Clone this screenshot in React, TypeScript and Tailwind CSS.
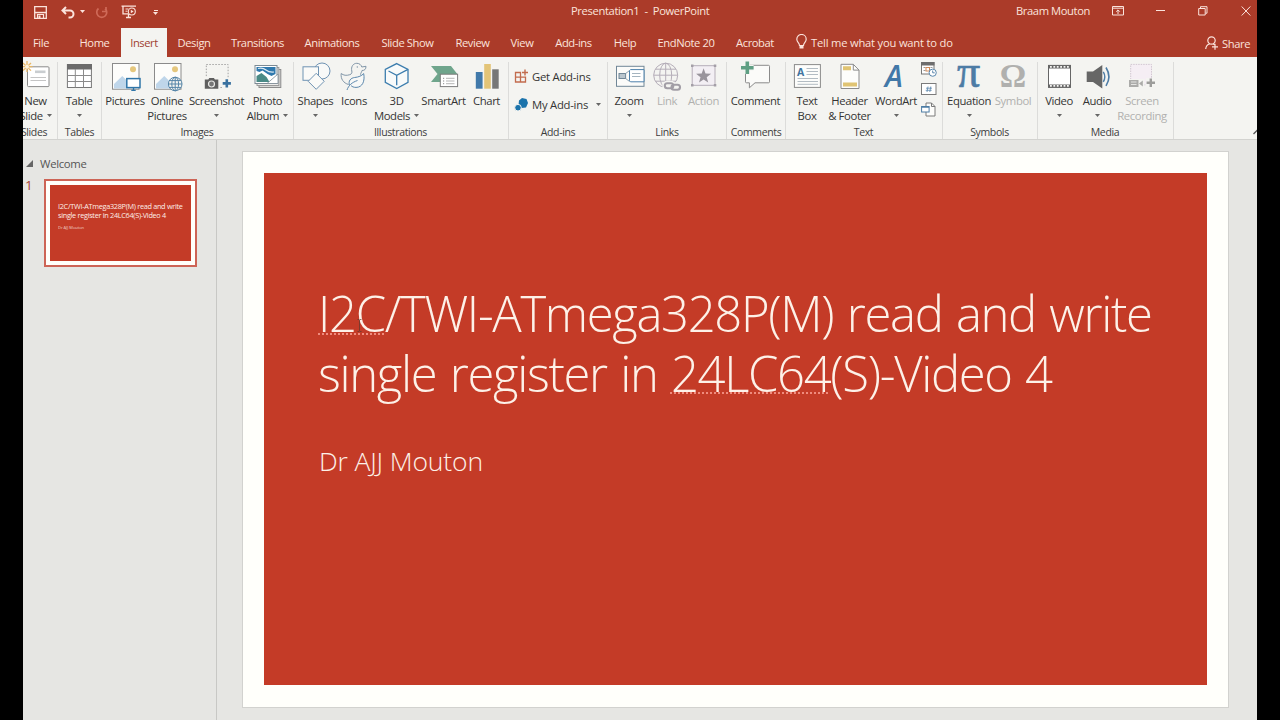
import type { ReactNode } from "react";
import clsx from "clsx";

const Icon = ({ children, className }: { children: ReactNode; className?: string }) => (
  <svg
    viewBox="0 0 30 30"
    fill="none"
    className={clsx("size-[30px] shrink-0 overflow-visible", className)}
  >
    {children}
  </svg>
);

const Caret = ({ className }: { className?: string }) => (
  <svg viewBox="0 0 5 3" className={clsx("h-[3px] w-[5px] shrink-0", className)}>
    <path d="M0 0h5L2.5 3z" fill="currentColor" />
  </svg>
);

const Globe = ({ cx, cy, r, stroke }: { cx: number; cy: number; r: number; stroke: string }) => (
  <g stroke={stroke} strokeWidth="1">
    <circle cx={cx} cy={cy} r={r} fill="#f4f4f1" />
    <ellipse cx={cx} cy={cy} rx={r * 0.5} ry={r} />
    <path
      d={`M${cx - r} ${cy}h${2 * r}M${cx} ${cy - r}v${2 * r}M${cx - r * 0.85} ${cy - r * 0.5}h${1.7 * r}M${cx - r * 0.85} ${cy + r * 0.5}h${1.7 * r}`}
    />
  </g>
);

const NewSlideIcon = () => (
  <Icon>
    <rect x="6.5" y="4.8" width="21.5" height="19.8" rx="1" fill="#fff" stroke="#8a8a8a" />
    <rect x="14" y="8.5" width="10.5" height="2.6" fill="#c9cdd0" />
    <path d="M9.5 15.5h15.5M9.5 18.5h15.5" stroke="#c5c5c5" />
    <path
      d="M6 -1v11M.5 4.7h11M2 1l8 7.6M10 1L2 8.6"
      stroke="#e9b765"
      strokeWidth="1.3"
    />
    <circle cx="6" cy="4.7" r="2" fill="#fbf3e0" />
  </Icon>
);

const TableIcon = () => (
  <Icon>
    <rect x="3.4" y="2.5" width="24" height="23" fill="#fff" stroke="#777" />
    <path d="M3 2h25v5.5H3z" fill="#6b6b6b" />
    <path d="M11.3 7v18.5M19.5 7v18.5M3.5 13.5h24M3.5 19.5h24" stroke="#8b8b8b" />
  </Icon>
);

const PictureBase = () => (
  <>
    <rect x="2.5" y="1.5" width="26.5" height="25.7" fill="#fdfdfb" stroke="#8b8b8b" />
    <circle cx="23" cy="7.3" r="3" fill="#e5c77d" />
    <path d="M4 26.5V22l8.3-8 5 5 3 3.5v4z" fill="#bfd6ea" />
  </>
);

const PicturesIcon = () => (
  <Icon>
    <PictureBase />
    <rect x="16.8" y="16.6" width="13.2" height="9" fill="#fff" stroke="#2f75a8" strokeWidth="1.5" />
    <path d="M21.3 28.3h4.4M23.5 26v2" stroke="#2f75a8" strokeWidth="1.3" />
  </Icon>
);

const OnlinePicturesIcon = () => (
  <Icon>
    <PictureBase />
    <Globe cx={23.2} cy={22} r={6.8} stroke="#5585a8" />
  </Icon>
);

const ScreenshotIcon = () => (
  <Icon>
    <rect x="4.3" y="2.5" width="21.8" height="23" stroke="#a3a3a3" strokeDasharray="1.5 1.5" />
    <path d="M2 15h15.5v12.5H2z" fill="#f4f4f1" />
    <path d="M20 16h8v10h-8z" fill="#f4f4f1" />
    <path d="M2.8 17.5h3.5l1-1.6h4.6l1 1.6h3.4v9.3H2.8z" fill="#5f5f5f" />
    <circle cx="9.5" cy="22" r="3" stroke="#e8e8e6" fill="#777" strokeWidth="1.2" />
    <path d="M24.8 17.3v8.2M20.7 21.4h8.2" stroke="#39719f" strokeWidth="2.6" />
  </Icon>
);

const PhotoAlbumIcon = () => (
  <Icon>
    <rect x="6" y="7.5" width="21.8" height="18" fill="#d8d8d6" stroke="#8b8b8b" />
    <rect x="4" y="5.5" width="21.8" height="18" fill="#ececea" stroke="#9b9b9b" />
    <rect x="2" y="3.5" width="22" height="18" fill="#fff" stroke="#7c8a94" />
    <path d="M3.5 5h19v7l-4 2-4-2-5-3.5-3 1.5-3-1z" fill="#2f78ad" />
    <path d="M5 6.5q5-1 8 1.5t8 2" stroke="#dbe9f2" strokeWidth="1.2" />
    <path d="M3.5 14l5-3 5 4 3 5h-13z" fill="#4a8a86" />
    <path d="M14 21.5l11-9.5v9.5z" fill="#fff" stroke="#7c8a94" strokeWidth=".8" />
  </Icon>
);

const ShapesIcon = () => (
  <Icon>
    <circle cx="21" cy="9" r="8" fill="#f8f9f8" stroke="#6f93b3" />
    <rect x="2" y="4.8" width="15.5" height="13.5" fill="#fafaf8" stroke="#6f93b3" />
    <path d="M15.2 11.3l8 8-8 8-8-8z" fill="#fafaf8" stroke="#6f93b3" />
  </Icon>
);

const IconsIcon = () => (
  <Icon>
    <path
      d="M9.5 22.5C4.5 21 1.5 17 2.2 11.5c2.5 2 5 2.3 8.6 1.2 2-.7 2.4-2 2-3.7-1-4 1.2-7.7 5-7.7 2.6 0 4.4 1.6 5 3.7l4.2-.7c0 3-1.4 4.2-4 4.2-.4 2-1.5 2.8-1.5 4.2"
      stroke="#8196a8"
    />
    <circle cx="18.3" cy="5" r=".7" fill="#8196a8" />
    <path
      d="M10.5 23.5c-1.4-4.5 1-7.5 5.2-8 4-.4 6.8-1.6 9-3.9 1.4 7.5-1.2 13.8-7.7 13.8-2.5 0-4-.8-5-1.9"
      fill="#f7f8f7"
      stroke="#5c88ad"
    />
    <path d="M8 28c1.5-4.5 5-7.7 10.5-9.5" stroke="#5c88ad" />
  </Icon>
);

const CubeIcon = () => (
  <Icon>
    <path
      d="M14.7 1.6l11.3 5.8v13L14.7 26.6 3.3 20.4v-13z"
      fill="#f8fafa"
      stroke="#3c7dae"
      strokeWidth="1.3"
    />
    <path d="M6.5 9l8.2 4.3L26 7.4M14.7 13.3v10" stroke="#3c7dae" strokeWidth="1.3" />
  </Icon>
);

const SmartArtIcon = () => (
  <Icon>
    <path d="M2 4h20l6.3 8-6.3 8H2l6.5-8z" fill="#6fa58c" />
    <rect x="11.3" y="12.2" width="17.3" height="12.4" fill="#fff" stroke="#7d7d7d" />
    <path d="M17 16.3h8.5M17 19h8.5M17 21.7h8.5" stroke="#b5b5b5" />
    <path d="M14 16.3h1.2M14 19h1.2M14 21.7h1.2" stroke="#8b8b8b" />
  </Icon>
);

const ChartIcon = () => (
  <Icon>
    <path d="M3.8 10h6.8v16.7H3.8z" fill="#4179aa" />
    <path d="M12.2 2h6.6v24.7h-6.6z" fill="#e3c477" />
    <path d="M20.2 7.3h6.5v19.4h-6.5z" fill="#777" />
  </Icon>
);

const ZoomIcon = () => (
  <Icon>
    <rect x="2.5" y="4.3" width="27.5" height="20" fill="#fbfbf9" stroke="#718797" />
    <rect x="5" y="11.5" width="6.6" height="5" fill="#b9c5cd" stroke="#718797" />
    <path d="M11.6 11.5l4-3M11.6 16.5l4 3" stroke="#8fa3b1" />
    <path d="M30 7.6H16.5l-1 1v10.2l1 1H30z" fill="#fff" stroke="#4d81ab" />
    <path d="M18 11.5h8.5M18 14.5h8.5" stroke="#a4b4bf" />
  </Icon>
);

const LinkIcon = () => (
  <Icon>
    <Globe cx={13.7} cy={13.2} r={12} stroke="#b4adb8" />
    <g stroke="#f4f4f1" strokeWidth="5">
      <rect x="12.8" y="21.3" width="8.5" height="5" rx="2.5" />
      <rect x="19.5" y="22.8" width="8.5" height="5" rx="2.5" />
    </g>
    <g stroke="#a29ea6" strokeWidth="2.1">
      <rect x="12.8" y="21.3" width="8.5" height="5" rx="2.5" />
      <rect x="19.5" y="22.8" width="8.5" height="5" rx="2.5" />
    </g>
  </Icon>
);

const ActionIcon = () => (
  <Icon>
    <rect x="3.2" y="3.7" width="22.8" height="19.6" fill="#f3eff4" stroke="#b5adb8" />
    <path
      d="M2 2.5h2.5V5H2zM24.8 2.5h2.5V5h-2.5zM2 22h2.5v2.5H2zM24.8 22h2.5v2.5h-2.5z"
      fill="#a49fa7"
    />
    <path
      d="M14.6 6.3l1.9 5.2 5.6.2-4.4 3.5 1.5 5.4-4.6-3.1-4.6 3.1 1.5-5.4-4.4-3.5 5.6-.2z"
      fill="#99949c"
    />
  </Icon>
);

const CommentIcon = () => (
  <Icon>
    <path
      d="M5.5 3.3h22q1 0 1 1v15.5q0 1-1 1H14l-5.6 5V20.8H5.5q-1 0-1-1V4.3q0-1 1-1z"
      fill="#fbfbf9"
      stroke="#8b8b8b"
    />
    <path d="M6.3-.5v12.6M0 5.8h12.6" stroke="#f4f4f1" strokeWidth="5.5" />
    <path d="M6.3-.5v12.6M0 5.8h12.6" stroke="#5f9f83" strokeWidth="3.6" />
  </Icon>
);

const TextBoxIcon = () => (
  <Icon>
    <rect x="2.4" y="2.6" width="26" height="22.8" fill="#fdfdfb" stroke="#8b8b8b" />
    <text x="5" y="14" fontSize="10.5" fontWeight="700" fill="#41749f" className="font-['Open_Sans']">
      A
    </text>
    <path d="M14.5 6.5H26M14.5 9.5H26M14.5 12.5H26M5.5 16.5H26M5.5 19.5H26M5.5 22.3H26" stroke="#b3bcc3" />
  </Icon>
);

const HeaderIcon = () => (
  <Icon>
    <path d="M6 2.3h12.3l5.7 5.8v18.4H6z" fill="#fdfdfb" stroke="#8b8b8b" />
    <path d="M18.3 2.3v5.8H24" stroke="#8b8b8b" />
    <path d="M8 4.3h8v4H8zM8 20.5h14v4H8z" fill="#e0c473" />
  </Icon>
);

const WordArtIcon = () => (
  <Icon>
    <text
      x="4"
      y="25.3"
      fontSize="30"
      fontWeight="600"
      fontStyle="italic"
      fill="#4278a8"
      className="font-['Open_Sans'] tracking-normal"
    >
      A
    </text>
  </Icon>
);

const EquationIcon = () => (
  <Icon>
    <text
      x="3"
      y="25.4"
      fontSize="46"
      fill="#4d7ca5"
      stroke="#4d7ca5"
      strokeWidth=".6"
      className="font-['Liberation_Serif'] tracking-normal"
    >
      π
    </text>
  </Icon>
);

const OmegaIcon = () => (
  <Icon>
    <text
      x="1.8"
      y="24.8"
      fontSize="33"
      fontWeight="700"
      fill="#b0b0ae"
      className="font-['Liberation_Serif'] tracking-normal"
    >
      Ω
    </text>
  </Icon>
);

const VideoIcon = () => (
  <Icon>
    <rect x="4.5" y="3.4" width="22" height="22" fill="#fff" stroke="#666" />
    <path d="M4.5 4.8h22M4.5 24h22" stroke="#666" strokeWidth="3.2" />
    <path d="M6 4.9h20M6 23.9h20" stroke="#f5f5f3" strokeWidth="1.8" strokeDasharray="1.8 1.6" />
  </Icon>
);

const AudioIcon = () => (
  <Icon>
    <path d="M4.7 9.5H11L20.3 3v23.5L11 20H4.7z" fill="#666" />
    <path d="M21.3 9.8q3 5 0 10" stroke="#4d7ca5" strokeWidth="1.4" />
    <path d="M24 5.5q5.8 9.2 0 18.4" stroke="#4d7ca5" strokeWidth="1.6" />
  </Icon>
);

const ScreenRecordingIcon = () => (
  <Icon>
    <rect x="3.7" y="2.4" width="20.8" height="20.5" fill="#f5eef4" stroke="#d2c6d2" strokeDasharray="1.5 1" />
    <path d="M1.5 17h16v9h-16zM19 16h6.500v10H19z" fill="#f4f4f1" />
    <path d="M2 18h9.5v7H2zM12 21.5l3.8-3v6z" fill="#ababa9" />
    <path d="M4 20h5.5M4 22.5h5.5" stroke="#e4e4e2" />
    <path d="M23.8 16.6v8.4M19.6 20.8H28" stroke="#9d9d9b" strokeWidth="2.4" />
  </Icon>
);

type RibbonButtonProps = {
  icon: ReactNode;
  lines: string[];
  width: string;
  caret?: "below" | "inline";
  disabled?: boolean;
};

const RibbonButton = ({ icon, lines, width, caret, disabled }: RibbonButtonProps) => (
  <button
    className={clsx(
      "flex shrink-0 flex-col items-center leading-[15px] whitespace-nowrap",
      width,
      disabled ? "text-[#b1b1af]" : "text-[#343434]",
    )}
  >
    <span className="mb-px">{icon}</span>
    {lines.map((line, i) => (
      <span key={line} className="flex items-center">
        {line}
        {caret === "inline" && i === lines.length - 1 && (
          <Caret className="ml-1 text-[#666]" />
        )}
      </span>
    ))}
    {caret === "below" && <Caret className="mt-[6px] text-[#666]" />}
  </button>
);

const RibbonGroup = ({
  label,
  className,
  labelClassName,
  children,
}: {
  label: string;
  className: string;
  labelClassName?: string;
  children: ReactNode;
}) => (
  <div
    className={clsx(
      "flex h-[77px] shrink-0 flex-col border-r border-[#dcdcda] text-[11.3px] tracking-[-0.38px]",
      className,
    )}
  >
    <div className="flex h-[64px]">{children}</div>
    <div
      className={clsx(
        "text-center text-[10.5px] leading-[13px] tracking-[-0.36px] whitespace-nowrap text-[#3d3d3d]",
        labelClassName,
      )}
    >
      {label}
    </div>
  </div>
);

const SmallTextIcons = () => (
  <div className="flex flex-col gap-[6px] pl-px">
    <svg viewBox="0 0 16 15" fill="none" className="h-[15px] w-4">
      <rect x=".5" y=".5" width="12.5" height="11.5" fill="#fff" stroke="#777" />
      <path d="M0 0h13.5v3.5H0z" fill="#6d6d6d" />
      <path d="M2.5 5.5h2M2.5 8.5h2M9.5 5.5h2" stroke="#9a9a9a" />
      <rect x="5" y="5.5" width="3.5" height="3.5" stroke="#d08a5a" />
      <circle cx="11.7" cy="10.7" r="3.6" fill="#fff" stroke="#5c88ad" />
      <path d="M11.7 8.5v2.3h2" stroke="#5c88ad" />
    </svg>
    <svg viewBox="0 0 16 13" fill="none" className="h-[13px] w-4">
      <rect x=".5" y=".5" width="14.5" height="11" fill="#fff" stroke="#7b7b7b" />
      <path d="M7 3.5l-1 5.5M9.8 3.5l-1 5.5M5 5.2h6M4.7 7.3h6" stroke="#5c88ad" strokeWidth=".8" />
    </svg>
    <svg viewBox="0 0 16 15" fill="none" className="h-[15px] w-4">
      <path d="M5 1h5.5l3.5 3.5V14H5z" fill="#fdfdfb" stroke="#7b7b7b" />
      <path d="M10.5 1v3.5H14" stroke="#7b7b7b" />
      <rect x=".6" y="4.5" width="7.5" height="5.5" fill="#fff" stroke="#4d7ca5" />
      <path d="M.6 5h7.5" stroke="#4d7ca5" strokeWidth="1.5" />
    </svg>
  </div>
);

const Ribbon = () => (
  <div className="flex h-[83px] shrink-0 overflow-x-clip border-b border-[#d3d3d0] bg-[#f4f4f1] pt-[5px]">
    <RibbonGroup label="Slides" className="w-[35px] pr-[9px]" labelClassName="-ml-[3px]">
      <RibbonButton icon={<NewSlideIcon />} lines={["New", "Slide"]} width="w-[25px]" caret="inline" />
    </RibbonGroup>
    <RibbonGroup label="Tables" className="w-[44px]">
      <RibbonButton icon={<TableIcon />} lines={["Table"]} width="w-[42px]" caret="below" />
    </RibbonGroup>
    <RibbonGroup label="Images" className="w-[192px] pl-px" labelClassName="-ml-[2px]">
      <RibbonButton icon={<PicturesIcon />} lines={["Pictures"]} width="w-[44px]" />
      <RibbonButton icon={<OnlinePicturesIcon />} lines={["Online", "Pictures"]} width="w-[40px]" />
      <RibbonButton icon={<ScreenshotIcon />} lines={["Screenshot"]} width="w-[59px]" caret="below" />
      <RibbonButton icon={<PhotoAlbumIcon />} lines={["Photo", "Album"]} width="w-[43px]" caret="inline" />
    </RibbonGroup>
    <RibbonGroup label="Illustrations" className="w-[215px] pl-[3px]" labelClassName="-ml-[4px]">
      <RibbonButton icon={<ShapesIcon />} lines={["Shapes"]} width="w-[37px]" caret="below" />
      <RibbonButton icon={<IconsIcon />} lines={["Icons"]} width="w-[40px]" />
      <RibbonButton icon={<CubeIcon />} lines={["3D", "Models"]} width="w-[45px]" caret="inline" />
      <RibbonButton icon={<SmartArtIcon />} lines={["SmartArt"]} width="w-[49px]" />
      <RibbonButton icon={<ChartIcon />} lines={["Chart"]} width="w-[37px]" />
    </RibbonGroup>
    <RibbonGroup label="Add-ins" className="w-[99px]">
      <div className="flex flex-col gap-[13px] pt-[7px] pl-[5px] leading-[15px] tracking-[-0.25px] whitespace-nowrap text-[#343434]">
        <div className="flex items-center gap-[3px]">
          <svg viewBox="0 0 15 15" fill="none" className="size-[15px]">
            <path
              d="M1.5 3.5h5V13h-5zM1.5 8.2h10V13h-5"
              stroke="#c26b4d"
              strokeWidth="1.3"
            />
            <path d="M11 .5v6M8 3.5h6" stroke="#c26b4d" strokeWidth="1.4" />
          </svg>
          Get Add-ins
        </div>
        <div className="flex items-center gap-[3px]">
          <svg viewBox="0 0 15 15" className="size-[15px]">
            <path d="M8 1l4.5 1 1.5 4-2 4.5-4.5.5-3-3 .5-4.500z" fill="#1b73ab" />
            <circle cx="4" cy="10.7" r="3.3" fill="#1b73ab" stroke="#f4f4f1" />
          </svg>
          My Add-ins
          <Caret className="ml-[5px] text-[#666]" />
        </div>
      </div>
    </RibbonGroup>
    <RibbonGroup label="Links" className="w-[119px] pl-[3px]" labelClassName="-ml-[3px]">
      <RibbonButton icon={<ZoomIcon />} lines={["Zoom"]} width="w-[36px]" caret="below" />
      <RibbonButton icon={<LinkIcon />} lines={["Link"]} width="w-[40px]" disabled />
      <RibbonButton icon={<ActionIcon />} lines={["Action"]} width="w-[33px]" disabled />
    </RibbonGroup>
    <RibbonGroup label="Comments" className="w-[59px]">
      <RibbonButton icon={<CommentIcon />} lines={["Comment"]} width="w-[57px]" />
    </RibbonGroup>
    <RibbonGroup label="Text" className="w-[157px] pl-px" labelClassName="-ml-[2px]">
      <RibbonButton icon={<TextBoxIcon />} lines={["Text", "Box"]} width="w-[40px]" />
      <RibbonButton icon={<HeaderIcon />} lines={["Header", "& Footer"]} width="w-[45px]" />
      <RibbonButton icon={<WordArtIcon />} lines={["WordArt"]} width="w-[48px]" caret="below" />
      <SmallTextIcons />
    </RibbonGroup>
    <RibbonGroup label="Symbols" className="w-[95px] pl-[2px]" labelClassName="-ml-[3px]">
      <RibbonButton icon={<EquationIcon />} lines={["Equation"]} width="w-[48px]" caret="below" />
      <RibbonButton icon={<OmegaIcon />} lines={["Symbol"]} width="w-[40px]" disabled />
    </RibbonGroup>
    <RibbonGroup label="Media" className="w-[136px] pl-px" labelClassName="-ml-[2px]">
      <RibbonButton icon={<VideoIcon />} lines={["Video"]} width="w-[40px]" caret="below" />
      <RibbonButton icon={<AudioIcon />} lines={["Audio"]} width="w-[36px]" caret="below" />
      <RibbonButton icon={<ScreenRecordingIcon />} lines={["Screen", "Recording"]} width="w-[54px]" disabled />
    </RibbonGroup>
    <svg viewBox="0 0 8 6" fill="none" className="mt-[67px] -mr-1 ml-auto h-[6px] w-2 shrink-0">
      <path d="M.5 5L4 1.5 7.5 5" stroke="#555" strokeWidth="1.3" />
    </svg>
  </div>
);

const tabs = [
  { name: "File", width: "w-[36px] mr-[10px]" },
  { name: "Home", width: "w-[51px] mr-px" },
  { name: "Insert", width: "w-[46px]", active: true },
  { name: "Design", width: "w-[54px]" },
  { name: "Transitions", width: "w-[73px]" },
  { name: "Animations", width: "w-[76px]" },
  { name: "Slide Show", width: "w-[75px]" },
  { name: "Review", width: "w-[55px]" },
  { name: "View", width: "w-[44px]" },
  { name: "Add-ins", width: "w-[59px]" },
  { name: "Help", width: "w-[44px]" },
  { name: "EndNote 20", width: "w-[78px]" },
  { name: "Acrobat", width: "w-[60px]" },
];

const TitleBar = () => (
  <div className="flex h-7 shrink-0 items-start text-[11.2px]">
    <div className="flex h-6 w-[548px] items-center pl-[11px]">
      <svg viewBox="0 0 13 13" fill="none" className="size-[13px]">
        <path d="M.7 .7h11.6v11.6H.7z" stroke="currentColor" strokeWidth="1.3" />
        <path d="M3.5 12.5v-4h6v4" stroke="currentColor" strokeWidth="1.2" />
        <path d="M1 5.8h11v1.5H1z" fill="currentColor" />
        <path d="M4.5 9.5h2V12h-2z" fill="currentColor" />
      </svg>
      <svg viewBox="0 0 14 13" fill="none" className="ml-[14px] h-[13px] w-[14px]">
        <path
          d="M5 1L1.5 4.5 5 8M1.5 4.5H9a3.5 3.5 0 0 1 0 7H7.5"
          stroke="currentColor"
          strokeWidth="2"
        />
      </svg>
      <Caret className="mb-[2px] ml-[5px]" />
      <svg viewBox="0 0 13 13" fill="none" className="ml-[10px] size-[13px] text-[#cf6a58]">
        <path d="M3.5 2.5a5 5 0 1 0 6.5 0M7 5.5h4V1" stroke="currentColor" strokeWidth="1.7" />
      </svg>
      <svg viewBox="0 0 16 14" fill="none" className="ml-[13px] h-[14px] w-4">
        <path d="M.5 1.2H15M2 1.5v7.3h5M5 12.5h5M7.5 9v3.5" stroke="currentColor" strokeWidth="1.3" />
        <path d="M4.5 4h3M4.5 6.2h2" stroke="currentColor" />
        <circle cx="10.8" cy="6.5" r="3.5" fill="#ab3b29" stroke="currentColor" strokeWidth="1.1" />
        <path d="M9.8 4.7v3.6l2.8-1.8z" fill="currentColor" />
      </svg>
      <div className="ml-[16px] flex flex-col items-center gap-px">
        <span className="h-px w-[4px] bg-current" />
        <Caret />
      </div>
    </div>
    <div className="w-[445px] pt-[3px] leading-4 tracking-[-0.36px] whitespace-pre">
      Presentation1  -  PowerPoint
    </div>
    <div className="w-[96px] pt-[3px] leading-4 tracking-[-0.4px] whitespace-nowrap">Braam Mouton</div>
    <svg viewBox="0 0 12 10" fill="none" className="mt-[6px] h-[10px] w-3">
      <path d="M.5 .5h11V9H.5zM.5 2.2h11" stroke="currentColor" />
      <path d="M6 8V4M4.2 5.7L6 3.9l1.8 1.8" stroke="currentColor" />
    </svg>
    <span className="mt-[10px] ml-8 h-px w-[9px] bg-current" />
    <svg viewBox="0 0 10 10" fill="none" className="mt-[6px] ml-[33px] size-[10px]">
      <path d="M.7 2.5h6.5V9H.7zM2.5 2.3V.7H9v6.5H7.5" stroke="currentColor" />
    </svg>
    <svg viewBox="0 0 10 10" fill="none" className="mt-[6px] ml-[33px] size-[10px]">
      <path d="M.7 .5l8.6 9M9.3 .5l-8.6 9" stroke="currentColor" />
    </svg>
  </div>
);

const TabBar = () => (
  <div className="flex h-[29px] shrink-0 text-[11.2px] leading-[29px] tracking-[-0.42px] whitespace-nowrap">
    {tabs.map(({ name, width, active }) => (
      <div
        key={name}
        className={clsx("flex justify-center", width, active && "bg-[#f4f4f1] text-[#9f3f31]")}
      >
        {name}
      </div>
    ))}
    <svg viewBox="0 0 11 16" fill="none" className="mt-[6px] ml-[11px] h-4 w-[11px]">
      <path
        d="M3.5 11.5c0-2.5-2.7-3.3-2.7-6.3a4.7 4.7 0 0 1 9.4 0c0 3-2.7 3.8-2.7 6.300z"
        stroke="currentColor"
        strokeWidth="1.2"
      />
      <path d="M3.5 12h4v2.5h-4z" fill="currentColor" />
    </svg>
    <span className="ml-[4px] tracking-[-0.2px]">Tell me what you want to do</span>
    <div className="mr-[7px] ml-auto flex items-center gap-[3px] pt-px">
      <svg viewBox="0 0 14 14" fill="none" className="size-[14px]">
        <circle cx="6.5" cy="4.5" r="3.7" stroke="currentColor" strokeWidth="1.2" />
        <path d="M.7 13c.3-3 1.8-4.600 4-5M8 7.7l1.5 1M10 7.8v6M7 10.8h6" stroke="currentColor" strokeWidth="1.2" />
      </svg>
      Share
    </div>
  </div>
);

const squiggle =
  "underline decoration-dotted decoration-[#ef8b7d] decoration-[1.5px] underline-offset-[0.5px] [text-decoration-skip-ink:none]";

const SlidePanel = () => (
  <aside className="flex w-[194px] shrink-0 flex-col border-r border-[#c8c8c5] pt-[16px]">
    <div className="flex items-center text-[11.3px] leading-[15px] tracking-[-0.3px] text-[#555]">
      <svg viewBox="0 0 7 7" className="ml-[3px] size-[7px]">
        <path d="M7 0v7H0z" fill="#666" />
      </svg>
      <span className="ml-[7px]">Welcome</span>
    </div>
    <div className="mt-2 flex">
      <span className="w-[21px] pl-[2px] text-[13.5px] leading-[12px] text-[#a83f33]">1</span>
      <div className="h-[88px] w-[153px] border-2 border-[#cd6456] bg-[#fffffb] p-[4px]">
        <div className="h-full bg-[#c43b27] pt-[17px] pl-2 text-[#fdeee8]">
          <p className="text-[7.3px] leading-[9px] tracking-[-0.3px] whitespace-nowrap">
            I2C/TWI-ATmega328P(M) read and write
            <br />
            single register in 24LC64(S)-Video 4
          </p>
          <p className="mt-[5px] text-[4px] leading-[6px] opacity-80">Dr AJJ Mouton</p>
        </div>
      </div>
    </div>
  </aside>
);

const App = () => (
  <div className="h-[720px] w-[1280px] overflow-hidden bg-black px-[23px] font-['Open_Sans','Noto_Sans',sans-serif]">
    <div className="flex h-full flex-col bg-[#e6e6e3]">
      <header className="flex shrink-0 flex-col bg-[#ab3b29] text-[#fbe3dc]">
        <TitleBar />
        <TabBar />
      </header>
      <Ribbon />
      <main className="flex min-h-0 flex-1">
        <SlidePanel />
        <section className="flex-1 pt-[11px] pl-[25px]">
          <div className="h-[557px] w-[987px] border border-[#d2d2cf] bg-[#fffffb] p-[21px] pl-[21px]">
            <div className="relative h-[512px] w-[943px] bg-[#c43b27] pt-[111px] pl-[54px] font-light whitespace-nowrap text-[#fdf1e8]">
              <h1 className="text-[49px] leading-[59.5px] tracking-[-1.33px] [word-spacing:2px]">
                <span className={squiggle}>I2C</span>/TWI-ATmega328P(M) read and write
                <br />
                single register in <span className={squiggle}>24LC64</span>(S)-Video 4
              </h1>
              <p className="mt-[40px] pl-px text-[26.5px] leading-[36px] tracking-[-0.15px]">
                Dr AJJ Mouton
              </p>
              {/* text cursor hovering over the title */}
              <svg viewBox="0 0 5 13" fill="none" className="absolute top-[146px] left-[93px] h-[13px] w-[5px] opacity-70">
                <path d="M.5 .5H2l.5.5.5-.5h1.500M2.5 1v11M.5 12.5H2l.5-.5.5.5h1.500" stroke="#5d3a30" />
              </svg>
            </div>
          </div>
        </section>
      </main>
    </div>
  </div>
);

export default App;
